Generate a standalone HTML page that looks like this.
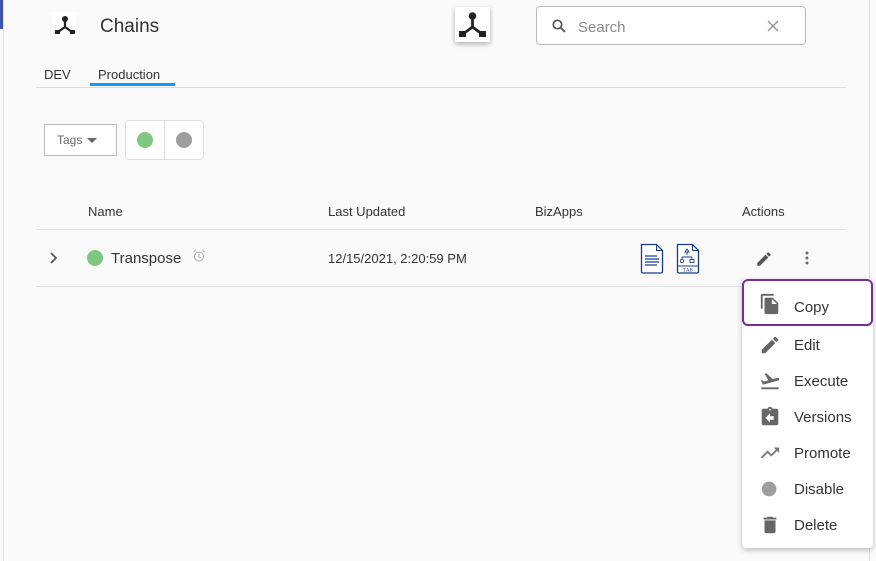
<!DOCTYPE html>
<html><head><meta charset="utf-8"><style>
*{box-sizing:border-box;margin:0;padding:0}
body{width:876px;height:561px;background:#fafafa;font-family:"Liberation Sans",sans-serif;color:#333;position:relative;overflow:hidden}
.a{position:absolute}
.menu{left:742px;top:279px;width:131px;height:269px;background:#fff;border-radius:4px;box-shadow:0 2px 6px rgba(0,0,0,.25)}
.mi{position:absolute;left:0;width:131px;height:36px;font-size:15px;color:#333}
.mi span{position:absolute;left:52px;top:11px}
.mi svg{position:absolute;left:17px;top:8px}
</style></head><body>
<div class="a" style="left:0;top:0;width:3px;height:29px;background:#3f51b5"></div>
<div class="a" style="left:869px;top:0;width:1px;height:561px;background:#ddd"></div>
<div class="a" style="left:3px;top:0;width:1px;height:561px;background:#e4e4e4"></div>
<div class="a" style="left:52px;top:12px;width:24px;height:26px;background:#fff"></div>
<svg class="a" style="left:54px;top:15px" width="22" height="20" viewBox="0 0 22 20"><circle cx="11" cy="4" r="3" fill="#222"/><path d="M11 4v8M11 12L4 17M11 12l7 5" stroke="#222" stroke-width="2.2" fill="none"/><rect x="1" y="15" width="5" height="4" fill="#222"/><rect x="16" y="15" width="5" height="4" fill="#222"/></svg>
<div class="a" style="left:100px;top:16px;font-size:19px;color:#333">Chains</div>
<div class="a" style="left:455px;top:7px;width:35px;height:35px;background:#fff;box-shadow:0 2px 5px rgba(0,0,0,.3)"></div>
<svg class="a" style="left:458px;top:11px" width="29" height="28" viewBox="0 0 29 28"><circle cx="14.5" cy="5" r="3.8" fill="#222"/><path d="M14.5 6v10M14.5 16L5 23M14.5 16l9.5 7" stroke="#222" stroke-width="2.8" fill="none"/><rect x="1" y="20" width="7" height="6" fill="#222"/><rect x="21" y="20" width="7" height="6" fill="#222"/></svg>
<div class="a" style="left:536px;top:6px;width:270px;height:39px;border:1px solid #bbb;border-radius:4px;background:#fff"></div>
<svg class="a" style="left:552px;top:19px" width="14" height="14" viewBox="0 0 14 14"><circle cx="5.5" cy="5.5" r="4.2" stroke="#555" stroke-width="1.7" fill="none"/><path d="M8.5 8.5l4.5 4.5" stroke="#555" stroke-width="1.9"/></svg>
<div class="a" style="left:578px;top:19px;font-size:15px;color:#888">Search</div>
<svg class="a" style="left:767px;top:20px" width="12" height="12" viewBox="0 0 12 12"><path d="M1 1l10 10M11 1L1 11" stroke="#999" stroke-width="1.5"/></svg>
<div class="a" style="left:44px;top:67px;font-size:13px;color:#333">DEV</div>
<div class="a" style="left:98px;top:67px;font-size:13px;color:#333">Production</div>
<div class="a" style="left:90px;top:83px;width:85px;height:3px;background:#0d99ff"></div>
<div class="a" style="left:36px;top:87px;width:810px;height:1px;background:#ddd"></div>
<div class="a" style="left:44px;top:124px;width:73px;height:32px;border:1px solid #bbb;background:#fff"></div>
<div class="a" style="left:57px;top:133px;font-size:12px;color:#666">Tags</div>
<div class="a" style="left:87px;top:138px;width:0;height:0;border-left:5px solid transparent;border-right:5px solid transparent;border-top:5px solid #666"></div>
<div class="a" style="left:125px;top:120px;width:79px;height:40px;border:1px solid #ddd;border-radius:4px;background:#fff"></div>
<div class="a" style="left:164px;top:121px;width:1px;height:38px;background:#ddd"></div>
<div class="a" style="left:137px;top:132px;width:16px;height:16px;border-radius:50%;background:#81c784"></div>
<div class="a" style="left:176px;top:132px;width:16px;height:16px;border-radius:50%;background:#9e9e9e"></div>
<div class="a" style="left:88px;top:204px;font-size:13px">Name</div>
<div class="a" style="left:328px;top:204px;font-size:13px">Last Updated</div>
<div class="a" style="left:535px;top:204px;font-size:13px">BizApps</div>
<div class="a" style="left:742px;top:204px;font-size:13px">Actions</div>
<div class="a" style="left:36px;top:229px;width:810px;height:1px;background:#e0e0e0"></div>
<div class="a" style="left:36px;top:286px;width:810px;height:1px;background:#e0e0e0"></div>
<svg class="a" style="left:49px;top:252px" width="10" height="12" viewBox="0 0 10 12"><path d="M2 1l5 5-5 5" stroke="#555" stroke-width="1.8" fill="none"/></svg>
<div class="a" style="left:87px;top:250px;width:16px;height:16px;border-radius:50%;background:#81c784"></div>
<div class="a" style="left:111px;top:250px;font-size:15px">Transpose</div>
<svg class="a" style="left:192px;top:249px" width="14" height="14" viewBox="0 0 14 14"><circle cx="7" cy="7.5" r="4.5" stroke="#aaa" fill="none"/><path d="M7 5v3l2 1M1.5 3l2-2M12.5 3l-2-2" stroke="#aaa" fill="none"/></svg>
<div class="a" style="left:328px;top:251px;font-size:13px">12/15/2021, 2:20:59 PM</div>
<svg class="a" style="left:640px;top:243px" width="24" height="31" viewBox="0 0 24 31"><path d="M1.5 1.5h15l6 6v21a1.5 1.5 0 0 1-1.5 1.5H3a1.5 1.5 0 0 1-1.5-1.5z" stroke="#1a3a8f" stroke-width="1.3" fill="#fff"/><path d="M16.5 1.5v6h6" stroke="#1a3a8f" fill="none"/><path d="M5 13h12M5 16h14M5 19h14M5 22h12" stroke="#1a3a8f" stroke-width="1.2"/></svg>
<svg class="a" style="left:676px;top:243px" width="24" height="31" viewBox="0 0 24 31"><path d="M1.5 1.5h15l6 6v21a1.5 1.5 0 0 1-1.5 1.5H3a1.5 1.5 0 0 1-1.5-1.5z" stroke="#1a3a8f" stroke-width="1.3" fill="#fff"/><path d="M16.5 1.5v6h6M1.5 23h21" stroke="#1a3a8f" fill="none"/><path d="M9 9l2-3 2 3zM11 9v3M6 14h10M6 14v2M16 14v2" stroke="#1a3a8f" fill="none" stroke-width=".9"/><circle cx="6" cy="18" r="1.7" stroke="#1a3a8f" fill="none" stroke-width=".9"/><rect x="14" y="16.5" width="4" height="3" stroke="#1a3a8f" fill="none" stroke-width=".9"/><text x="12" y="28.5" font-size="5" text-anchor="middle" fill="#1a3a8f" font-family="Liberation Serif">TAB</text></svg>
<svg class="a" style="left:755px;top:250px" width="18" height="18" viewBox="0 0 24 24"><path d="M3 17.25V21h3.75L17.8 9.94l-3.75-3.75zM20.7 7.04a1 1 0 0 0 0-1.41l-2.34-2.34a1 1 0 0 0-1.41 0l-1.83 1.83 3.75 3.75z" fill="#555"/></svg>
<svg class="a" style="left:804px;top:250px" width="6" height="16" viewBox="0 0 6 16"><circle cx="3" cy="3" r="1.5" fill="#666"/><circle cx="3" cy="8" r="1.5" fill="#666"/><circle cx="3" cy="13" r="1.5" fill="#666"/></svg>
<div class="a menu">
 <div class="mi" style="top:0;height:47px;border:2.5px solid #7b2d8e;border-radius:6px;left:0"><svg style="left:15px;top:12px" width="22" height="22" viewBox="0 0 24 24"><path d="M16 1H4a2 2 0 0 0-2 2v14h2V3h12zM15 5H8a2 2 0 0 0-2 2v14a2 2 0 0 0 2 2h11a2 2 0 0 0 2-2V11zm-1 7V6.5l5.5 5.5z" fill="#666"/></svg><span style="left:50px;top:18px">Copy</span></div>
 <div class="mi" style="top:47px"><svg width="22" height="22" viewBox="0 0 24 24"><path d="M3 17.25V21h3.75L17.8 9.94l-3.75-3.75zM20.7 7.04a1 1 0 0 0 0-1.41l-2.34-2.34a1 1 0 0 0-1.41 0l-1.83 1.83 3.75 3.75z" fill="#666"/></svg><span>Edit</span></div>
 <div class="mi" style="top:83px"><svg width="22" height="22" viewBox="0 0 24 24"><path d="M2.5 19h19v2h-19zM22.07 9.64c-.21-.8-1.040-1.28-1.84-1.06L14.92 10l-6.9-6.43-1.93.51 4.14 7.17-4.97 1.33-1.97-1.54-1.45.39 2.59 4.49 16.57-4.44c.81-.23 1.28-1.05 1.070-1.84z" fill="#666"/></svg><span>Execute</span></div>
 <div class="mi" style="top:119px"><svg width="22" height="22" viewBox="0 0 24 24"><path d="M19 3h-4.18C14.4 1.84 13.3 1 12 1s-2.4.84-2.82 2H5a2 2 0 0 0-2 2v14a2 2 0 0 0 2 2h14a2 2 0 0 0 2-2V5a2 2 0 0 0-2-2zm-7 0a1 1 0 1 1 0 2 1 1 0 0 1 0-2zm4 12h-4v3l-5-5 5-5v3h4z" fill="#666"/></svg><span>Versions</span></div>
 <div class="mi" style="top:155px"><svg width="22" height="22" viewBox="0 0 24 24"><path d="M16 6l2.29 2.29-4.88 4.880-4-4L2 16.59 3.41 18l6-6 4 4 6.3-6.29L22 12V6z" fill="#777"/></svg><span>Promote</span></div>
 <div class="mi" style="top:191px"><svg width="22" height="22" viewBox="0 0 24 24"><circle cx="11" cy="12" r="8" fill="#9e9e9e"/></svg><span>Disable</span></div>
 <div class="mi" style="top:227px"><svg width="22" height="22" viewBox="0 0 24 24"><path d="M6 19a2 2 0 0 0 2 2h8a2 2 0 0 0 2-2V7H6zM19 4h-3.5l-1-1h-5l-1 1H5v2h14z" fill="#666"/></svg><span>Delete</span></div>
</div>
</body></html>
